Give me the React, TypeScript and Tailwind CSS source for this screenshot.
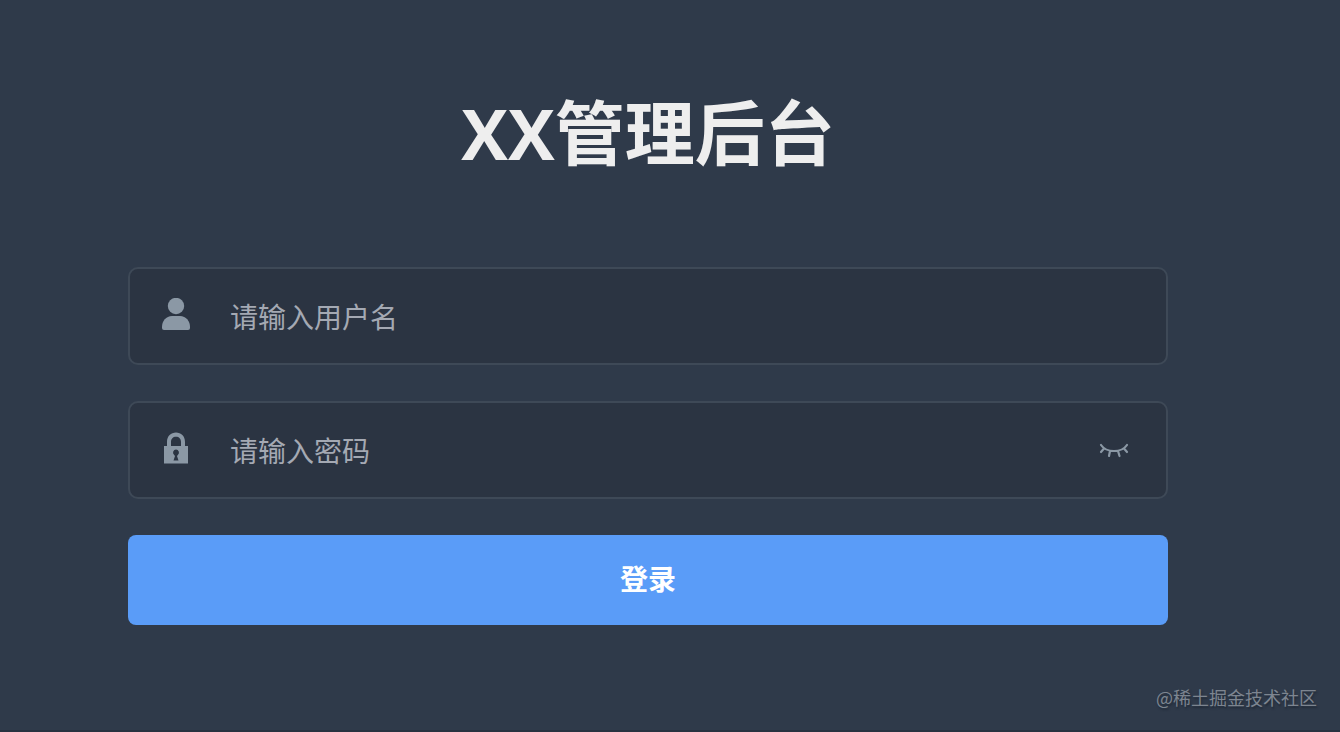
import { useState } from "react";
import type { ReactNode } from "react";

function UserIcon() {
  return (
    <svg className="h-8 w-7" viewBox="0 0 28 32" fill="currentColor" aria-hidden="true">
      <circle cx="14" cy="8" r="8.2" />
      <path d="M10 18H18C24 18 28 23 28 29V30Q28 32 26 32H2Q0 32 0 30V29C0 23 4 18 10 18Z" />
    </svg>
  );
}

function LockIcon() {
  return (
    <svg className="h-8 w-7" viewBox="0 0 28 32" fill="currentColor" aria-hidden="true">
      <path
        fillRule="evenodd"
        d="M2 14H5V10C5 4 9 .6 14 .6S23 4 23 10V14H26V31.500H2ZM9 14H19V10C19 6.700 17 4.700 14 4.700S9 6.700 9 10ZM14 17.500A3 3 0 0 0 12 22.700L13 24L11.500 28.500H16.500L15 24L16 22.700A3 3 0 0 0 14 17.500Z"
      />
    </svg>
  );
}

function EyeClosedIcon() {
  return (
    <svg
      className="h-4 w-8"
      viewBox="0 0 32 16"
      fill="none"
      stroke="currentColor"
      strokeWidth="2.2"
      strokeLinecap="round"
      aria-hidden="true"
    >
      <path d="M3 3Q7 9 16 9T29 3M6 6.500L3 10M12 9L11 14M20 9L21.500 14M26 6.500L29 10" />
    </svg>
  );
}

type FieldProps = {
  label: string;
  icon: ReactNode;
  type: string;
  value: string;
  onChange: (value: string) => void;
  children?: ReactNode;
};

function Field({ label, icon, type, value, onChange, children }: FieldProps) {
  return (
    <div className="flex h-[98px] items-center rounded-[10px] border-2 border-[#3e4957] bg-[#2b3442] pr-9 pl-8 text-[#8b98a5]">
      <span className="pb-1">{icon}</span>
      <input
        className="ml-10 h-full min-w-0 flex-1 bg-transparent text-[28px] text-white outline-none placeholder:text-[#a4a9b3]"
        type={type}
        aria-label={label}
        placeholder={label}
        value={value}
        onChange={(event) => onChange(event.target.value)}
      />
      {children}
    </div>
  );
}

export default function App() {
  const [username, setUsername] = useState("");
  const [password, setPassword] = useState("");
  const [visible, setVisible] = useState(false);

  return (
    <main className="flex min-h-screen flex-col border-b-2 border-[#283240] bg-[#2f3a4a] font-['Noto_Sans_CJK_SC',sans-serif]">
      <form
        className="flex flex-col gap-9 pt-[82px] pr-[172px] pl-32"
        onSubmit={(event) => event.preventDefault()}
      >
        <h1 className="mb-[47px] text-center font-['Open_Sans','Noto_Sans_CJK_SC',sans-serif] text-[70px] leading-[102px] font-bold text-[#eeeeee]">
          XX管理后台
        </h1>
        <Field
          label="请输入用户名"
          icon={<UserIcon />}
          type="text"
          value={username}
          onChange={setUsername}
        />
        <Field
          label="请输入密码"
          icon={<LockIcon />}
          type={visible ? "text" : "password"}
          value={password}
          onChange={setPassword}
        >
          <button type="button" aria-label="显示密码" onClick={() => setVisible(!visible)}>
            <EyeClosedIcon />
          </button>
        </Field>
        <button
          className="h-[90px] rounded-lg bg-[#5a9cf8] pb-1 text-[28px] font-bold text-white"
          type="submit"
        >
          登录
        </button>
      </form>
      <footer className="mt-auto pr-[23px] pb-[19px] text-right text-[18px] leading-7 text-[#7d8590] [text-shadow:1px_2px_2px_#202a38]">
        @稀土掘金技术社区
      </footer>
    </main>
  );
}
